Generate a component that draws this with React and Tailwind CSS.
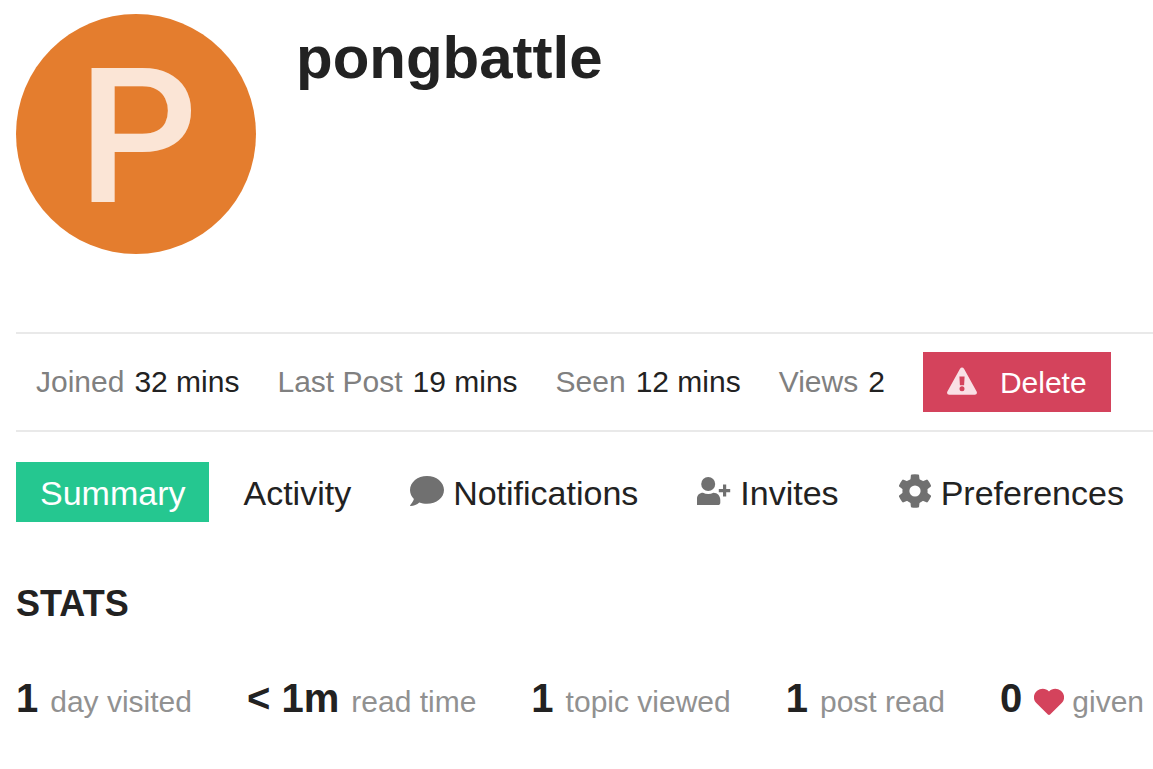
const details = [
  { label: "Joined", value: "32 mins" },
  { label: "Last Post", value: "19 mins" },
  { label: "Seen", value: "12 mins" },
  { label: "Views", value: "2" },
];

function NavIcon({ children }) {
  return (
    <svg viewBox="0 1 34 34" className="size-[34px] shrink-0 overflow-visible fill-[#707070]" aria-hidden="true">
      {children}
    </svg>
  );
}

function CommentIcon() {
  return (
    <NavIcon>
      <path d="M17 1C26.400 1 34 7.200 34 15C34 22.800 26.400 28.800 17 28.800C14.200 28.800 11.600 28.300 9.300 27.400C7 29.400 3.800 31 .7 31C.1 31-.1 30.400.3 29.900C1.900 28.300 3.400 26 3.900 24.100C1.500 21.600 0 18.400 0 15C0 7.200 7.600 1 17 1Z" />
    </NavIcon>
  );
}

function UserPlusIcon() {
  return (
    <NavIcon>
      <circle cx="11.200" cy="9" r="7" />
      <path d="M6 17.800C7.600 18.600 9.300 19 11.200 19S14.800 18.600 16.400 17.800C20.600 17.800 23.300 21 23.300 25V27.700C23.300 29.200 22.300 30 21 30H0V23.500C0 20.200 2.600 17.800 6 17.800Z" />
      <path d="M26 9.500H29.200V14H33.200V17.200H29.200V21.600H26V17.200H21.800V14H26Z" />
    </NavIcon>
  );
}

function GearIcon() {
  return (
    <NavIcon>
      <circle cx="17" cy="16" r="12.600" />
      <path id="tooth" d="M13.800-.6Q17-1 20.200-.6Q21-.4 21.100.4L21.800 6.500H12.200L12.900.4Q13-.4 13.800-.6Z" />
      {[60, 120, 180, 240, 300].map((angle) => (
        <use key={angle} href="#tooth" transform={`rotate(${angle} 17 16)`} />
      ))}
      <circle cx="17" cy="16" r="5.600" fill="#fff" />
    </NavIcon>
  );
}

function WarningIcon() {
  return (
    <svg viewBox="0 0 30 30" className="size-[30px] shrink-0 fill-[#f9e0e5]" aria-hidden="true">
      <path fillRule="evenodd" d="M13 1.800C14 .2 16 .2 17 1.800L29.600 24.500C30.500 26.200 29.400 27.700 27.700 27.700H2.300C.6 27.700-.5 26.200.4 24.500ZM12.400 9.500L12.900 18.200H17.100L17.600 9.500ZM15 19.200A2.500 2.500 0 1 0 15 24.200A2.500 2.500 0 1 0 15 19.200Z" />
    </svg>
  );
}

function HeartIcon() {
  return (
    <svg viewBox="0 0 30 28" className="h-7 w-[30px] shrink-0 self-center fill-[#d4435c]" aria-hidden="true">
      <path d="M15 3.500C18 0 23.300-.2 26.900 2.700C31 6.200 31 11.600 27.700 15L16.100 26.600C15.500 27.200 14.500 27.200 13.900 26.600L2.300 15C-1 11.600-1 6.200 3.100 2.700C6.700-.2 12 0 15 3.500Z" />
    </svg>
  );
}

function Stat({ value, children }) {
  return (
    <li className="flex items-baseline gap-3 whitespace-nowrap">
      <strong className="text-[40px] leading-[48px] text-[#222]">{value}</strong>
      <span className="flex items-baseline gap-2">{children}</span>
    </li>
  );
}

export default function App() {
  return (
    <main className="bg-white pl-4 pt-[14px] font-['Liberation_Sans',Arial,sans-serif] text-[#222]">
      <header className="flex items-start gap-10 pb-[78px]">
        <div className="flex size-60 shrink-0 items-center justify-center rounded-full bg-[#e47d2e] pt-2 pl-1 font-['Roboto',sans-serif] text-[188px] leading-none font-medium text-[#fbe5d6]">
          P
        </div>
        <h1 className="pt-2 text-[60px] leading-[72px] font-bold">pongbattle</h1>
      </header>
      <section className="flex h-[100px] items-center border-y-2 border-[#e9e9e9] pl-5">
        <dl className="flex gap-[38px] text-[30px] leading-9 whitespace-nowrap">
          {details.map((d) => (
            <div key={d.label} className="flex gap-[10px]">
              <dt className="text-[#808080]">{d.label}</dt>
              <dd>{d.value}</dd>
            </div>
          ))}
        </dl>
        <button type="button" className="ml-[38px] flex h-[60px] items-center gap-[23px] bg-[#d4435c] px-6 text-[30px] text-white">
          <WarningIcon />
          Delete
        </button>
      </section>
      <nav className="mt-[30px] flex h-[60px] items-center text-[34px] whitespace-nowrap">
        <a href="#summary" className="flex h-full items-center bg-[#25c790] px-6 pt-0.5 text-white">Summary</a>
        <a href="#activity" className="ml-[34px] pt-0.5">Activity</a>
        <a href="#notifications" className="ml-[59px] flex items-center gap-[9px] pt-0.5">
          <CommentIcon />
          Notifications
        </a>
        <a href="#invites" className="ml-[59px] flex items-center gap-[9px] pt-0.5">
          <UserPlusIcon />
          Invites
        </a>
        <a href="#preferences" className="ml-[59px] flex items-center gap-[9px] pt-0.5">
          <GearIcon />
          Preferences
        </a>
      </nav>
      <section>
        <h2 className="pt-[60px] text-[36px] leading-[44px] font-bold">STATS</h2>
        <ul className="mt-12 flex gap-[55px] text-[30px] text-[#919191]">
          <Stat value="1">day visited</Stat>
          <Stat value="< 1m">read time</Stat>
          <Stat value="1">topic viewed</Stat>
          <Stat value="1">post read</Stat>
          <Stat value="0">
            <HeartIcon />
            given
          </Stat>
        </ul>
      </section>
    </main>
  );
}
